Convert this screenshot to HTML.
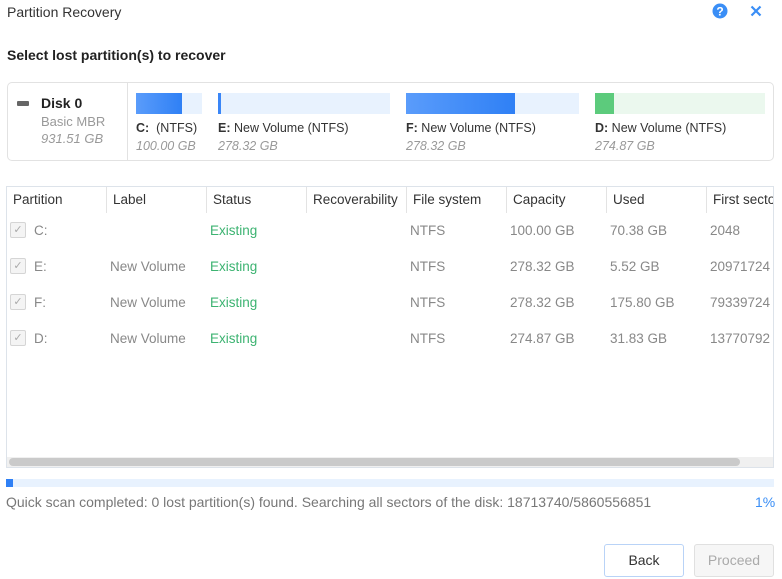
<!DOCTYPE html><html><head><style>
*{margin:0;padding:0;box-sizing:border-box}
body{width:782px;height:579px;background:#fff;font-family:"Liberation Sans",sans-serif;font-size:13px;color:#333;position:relative;overflow:hidden}
.a{position:absolute;white-space:nowrap}
.bar{position:absolute;height:21px}
.g{color:#999;font-style:italic}
.d{font-size:12.5px}
.th{position:absolute;top:0;height:26px;line-height:26px;padding-left:6px;border-right:1px solid #e3e3e3;width:100px;font-size:13.5px;color:#333}
.cb{position:absolute;width:16px;height:16px;border:1px solid #d5d5d5;border-radius:2px;background:#f4f4f4;color:#aaa;font-size:11px;text-align:center;line-height:14px}
.c{color:#888;font-size:13.5px}
.e{color:#3cb371;font-size:13.5px}
</style></head><body>
<div class="a" style="left:7px;top:4px;font-size:14px;color:#333">Partition Recovery</div>
<svg class="a" style="left:712px;top:3px" width="16" height="16"><circle cx="8" cy="8" r="7.5" fill="#3a8ef6"/><text x="8" y="12.5" font-size="12" font-weight="bold" fill="#fff" text-anchor="middle" font-family="Liberation Sans">?</text></svg>
<svg class="a" style="left:750px;top:5px" width="12" height="12"><path d="M1.5 1.5L10.5 10.5M10.5 1.5L1.5 10.5" stroke="#3a8ef6" stroke-width="2.2"/></svg>
<div class="a" style="left:7px;top:47px;font-size:14px;font-weight:bold;color:#222">Select lost partition(s) to recover</div>
<div class="a" style="left:7px;top:82px;width:767px;height:79px;border:1px solid #e2e2e2;border-radius:5px"></div>
<div class="a" style="left:127px;top:83px;width:1px;height:77px;background:#e2e2e2"></div>
<div class="a" style="left:17px;top:101px;width:12px;height:5px;background:#666;border-radius:1px"></div>
<div class="a" style="left:41px;top:95px;font-size:14px;font-weight:bold;color:#222">Disk 0</div>
<div class="a" style="left:41px;top:114px;color:#999">Basic MBR</div>
<div class="a g" style="left:41px;top:131px">931.51 GB</div>
<div class="bar" style="left:136px;top:93px;width:66px;background:#e8f2fe"></div>
<div class="bar" style="left:136px;top:93px;width:46px;background:linear-gradient(90deg,#5a9cfb,#2f80f5)"></div>
<div class="bar" style="left:218px;top:93px;width:172px;background:#e8f2fe"></div>
<div class="bar" style="left:218px;top:93px;width:3px;background:#3a86f7"></div>
<div class="bar" style="left:406px;top:93px;width:173px;background:#e8f2fe"></div>
<div class="bar" style="left:406px;top:93px;width:109px;background:linear-gradient(90deg,#5a9cfb,#2f80f5)"></div>
<div class="bar" style="left:595px;top:93px;width:170px;background:#ebf8ee"></div>
<div class="bar" style="left:595px;top:93px;width:19px;background:#5ccb7c"></div>
<div class="a d" style="left:136px;top:121px"><b>C:</b>&nbsp; (NTFS)</div>
<div class="a g d" style="left:136px;top:139px">100.00 GB</div>
<div class="a d" style="left:218px;top:121px"><b>E:</b> New Volume (NTFS)</div>
<div class="a g d" style="left:218px;top:139px">278.32 GB</div>
<div class="a d" style="left:406px;top:121px"><b>F:</b> New Volume (NTFS)</div>
<div class="a g d" style="left:406px;top:139px">278.32 GB</div>
<div class="a d" style="left:595px;top:121px"><b>D:</b> New Volume (NTFS)</div>
<div class="a g d" style="left:595px;top:139px">274.87 GB</div>
<div class="a" style="left:6px;top:186px;width:768px;height:282px;border:1px solid #dde3ea;overflow:hidden">
<div class="th" style="left:0">Partition</div><div class="th" style="left:100px">Label</div><div class="th" style="left:200px">Status</div><div class="th" style="left:300px">Recoverability</div><div class="th" style="left:400px">File system</div><div class="th" style="left:500px">Capacity</div><div class="th" style="left:600px">Used</div><div class="th" style="left:700px;border:none">First sector</div>
<div class="a" style="left:0;top:270px;width:768px;height:10px;background:#f0f0f0"></div>
<div class="a" style="left:2px;top:271px;width:731px;height:8px;background:#cacaca;border-radius:4px"></div>
</div>
<div class="cb a" style="left:10px;top:222px">✓</div><div class="a c" style="left:34px;top:223px">C:</div><div class="a e" style="left:210px;top:223px">Existing</div><div class="a c" style="left:410px;top:223px">NTFS</div><div class="a c" style="left:510px;top:223px">100.00 GB</div><div class="a c" style="left:610px;top:223px">70.38 GB</div><div class="a c" style="left:710px;top:223px">2048</div>
<div class="cb a" style="left:10px;top:258px">✓</div><div class="a c" style="left:34px;top:259px">E:</div><div class="a c" style="left:110px;top:259px">New Volume</div><div class="a e" style="left:210px;top:259px">Existing</div><div class="a c" style="left:410px;top:259px">NTFS</div><div class="a c" style="left:510px;top:259px">278.32 GB</div><div class="a c" style="left:610px;top:259px">5.52 GB</div><div class="a c" style="left:710px;top:259px">20971724</div>
<div class="cb a" style="left:10px;top:294px">✓</div><div class="a c" style="left:34px;top:295px">F:</div><div class="a c" style="left:110px;top:295px">New Volume</div><div class="a e" style="left:210px;top:295px">Existing</div><div class="a c" style="left:410px;top:295px">NTFS</div><div class="a c" style="left:510px;top:295px">278.32 GB</div><div class="a c" style="left:610px;top:295px">175.80 GB</div><div class="a c" style="left:710px;top:295px">79339724</div>
<div class="cb a" style="left:10px;top:330px">✓</div><div class="a c" style="left:34px;top:331px">D:</div><div class="a c" style="left:110px;top:331px">New Volume</div><div class="a e" style="left:210px;top:331px">Existing</div><div class="a c" style="left:410px;top:331px">NTFS</div><div class="a c" style="left:510px;top:331px">274.87 GB</div><div class="a c" style="left:610px;top:331px">31.83 GB</div><div class="a c" style="left:710px;top:331px">13770792</div>
<div class="a" style="left:6px;top:479px;width:768px;height:8px;background:#e8f2fe"></div>
<div class="a" style="left:6px;top:479px;width:7px;height:8px;background:#2f80f5"></div>
<div class="a" style="left:6px;top:494px;color:#777;font-size:14px">Quick scan completed: 0 lost partition(s) found. Searching all sectors of the disk: 18713740/5860556851</div>
<div class="a" style="left:755px;top:494px;color:#3a8ef6;font-size:14px">1%</div>
<div class="a" style="left:604px;top:544px;width:80px;height:33px;border:1px solid #b9d3f7;border-radius:3px;text-align:center;line-height:31px;color:#333;font-size:14px">Back</div>
<div class="a" style="left:694px;top:544px;width:80px;height:33px;border:1px solid #e0e0e0;border-radius:3px;background:#f6f6f6;text-align:center;line-height:31px;color:#aaa;font-size:14px">Proceed</div>
</body></html>
